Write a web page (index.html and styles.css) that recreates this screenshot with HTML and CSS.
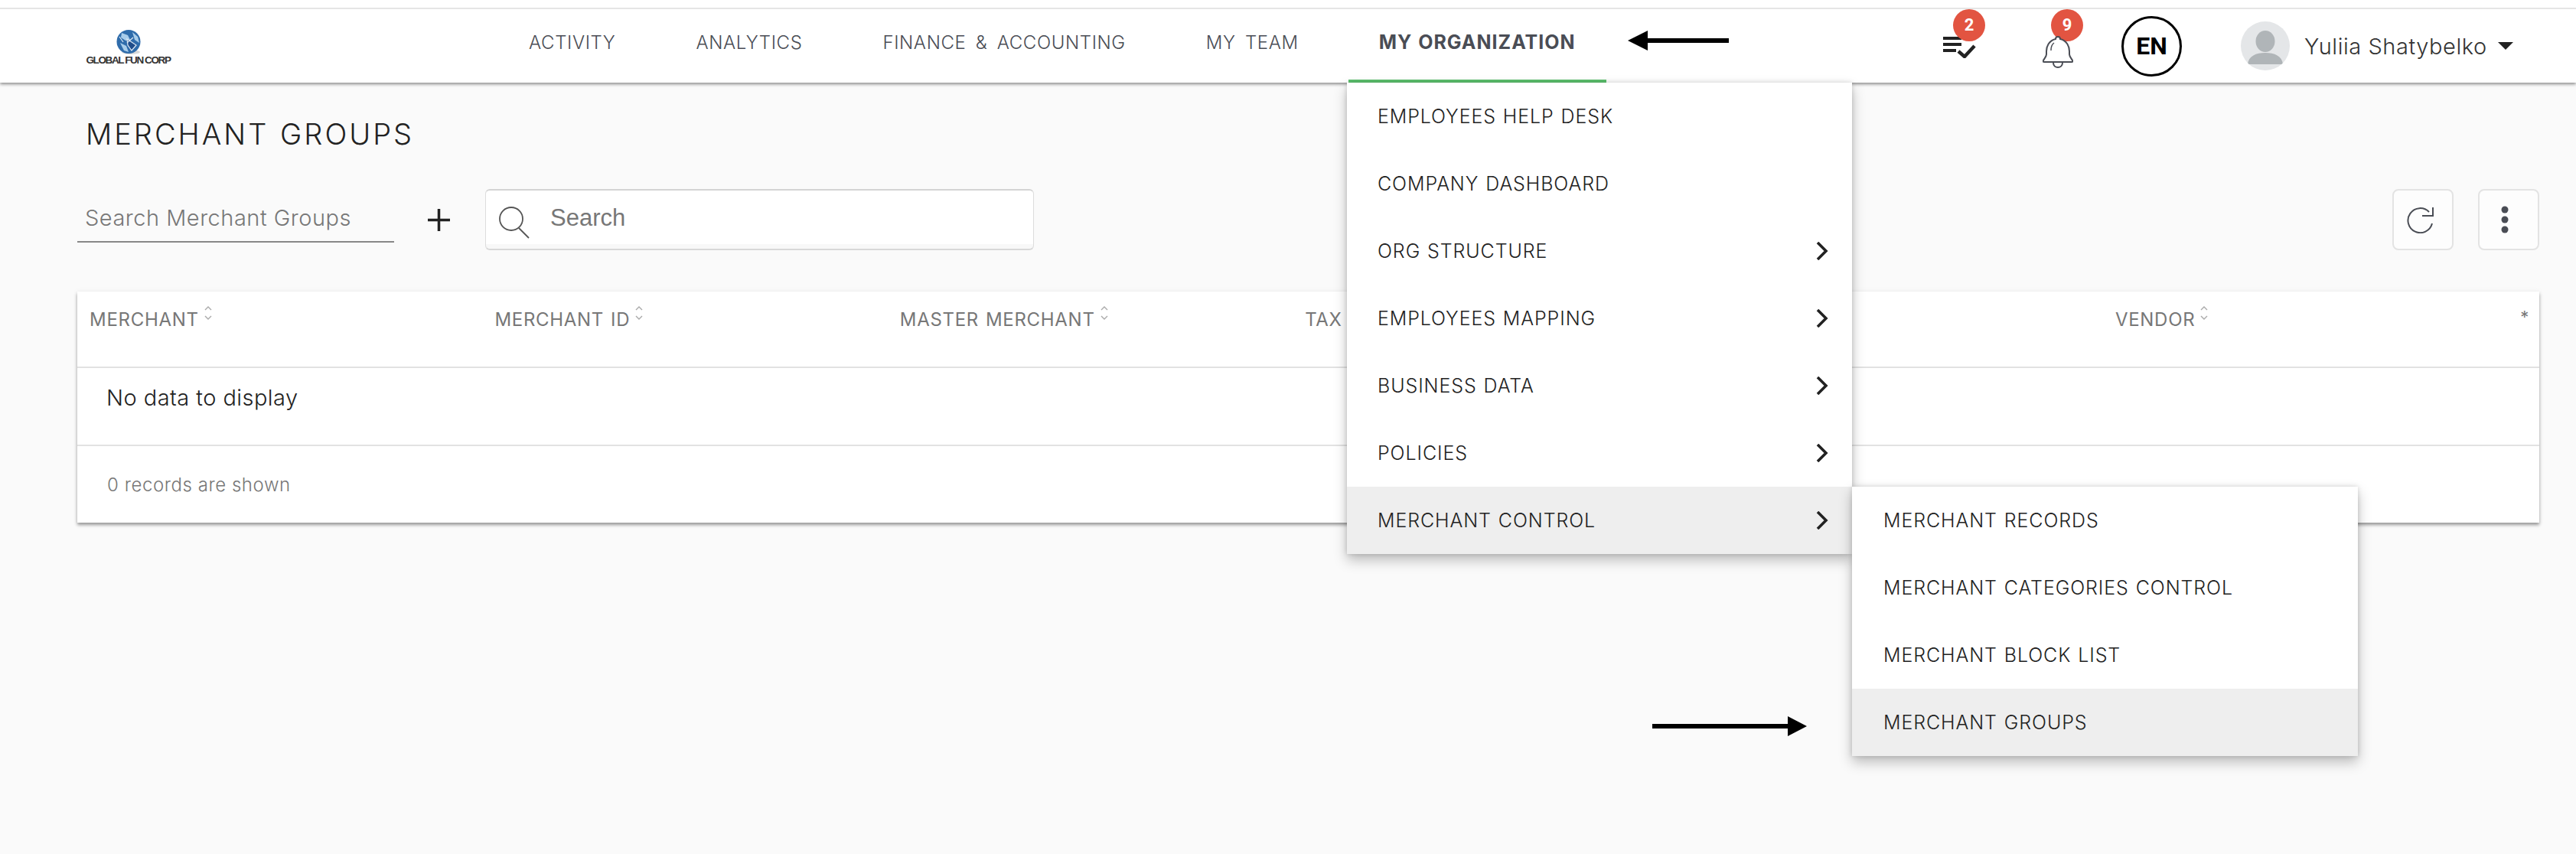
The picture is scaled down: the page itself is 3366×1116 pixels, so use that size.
FILE: index.html
```html
<!DOCTYPE html>
<html lang="en">
<head>
<meta charset="utf-8">
<title>Merchant Groups</title>
<link rel="stylesheet" href="styles.css">
</head>
<body>
<div class="page">
  <header class="topbar">
    <div class="logo">
      <svg class="globe" viewBox="0 0 32 32" aria-hidden="true">
        <ellipse cx="19" cy="29" rx="12" ry="3" fill="#d9d9d9"/>
        <circle cx="16" cy="15.500" r="15.500" fill="#2f6cab"/>
        <path d="M7 4l8 3 3 6-6 1-6-4zM21 3l7 6 2 8-6-4zM5 17l8 4 3 8-6-2z" fill="#a9cdea"/>
        <path d="M14 12l12 8-6 7-5-7zM4 9l5 7M22 10l-8 7" fill="#1f4d8a" stroke="#dfeaf5" stroke-width="1.200"/>
      </svg>
      <span class="logo-text">GLOBAL FUN CORP</span>
    </div>
    <nav class="nav">
      <a class="nav-link">ACTIVITY</a>
      <a class="nav-link">ANALYTICS</a>
      <a class="nav-link">FINANCE &amp; ACCOUNTING</a>
      <a class="nav-link">MY TEAM</a>
      <a class="nav-link nav-active">MY ORGANIZATION</a>
    </nav>
    <div class="user-tools">
      <div class="tool tool-tasks">
        <span class="badge">2</span>
        <svg class="icon-tasks" viewBox="0 0 43 28" aria-hidden="true">
          <path d="M0 0h24v4H0zM0 8h24v4H0zM0 16h17v4H0z" fill="#222"/>
          <path d="M20 19l8 7 13-14" fill="none" stroke="#222" stroke-width="4.500"/>
        </svg>
      </div>
      <div class="tool tool-bell">
        <span class="badge">9</span>
        <svg class="icon-bell" viewBox="0 0 40 42" aria-hidden="true">
          <path d="M20 1c-2 0-3 1-3 3C8 6 5 14 5 20v4c0 3-3 6-4 8q-1 2 1 2h36q2 0 1-2c-1-2-4-5-4-8v-4c0-6-3-14-12-16 0-2-1-3-3-3zM14 35c0 8 12 8 12 0" fill="#fff" stroke="#4a4d55" stroke-width="2"/>
          <path d="M11 19c0-5 1-8 4-10" fill="none" stroke="#4a4d55" stroke-width="1.500"/>
        </svg>
      </div>
      <div class="lang">EN</div>
      <div class="avatar">
        <svg viewBox="0 0 64 64" aria-hidden="true">
          <ellipse cx="32" cy="26" rx="12.500" ry="14" fill="#b0b5b8"/>
          <path d="M9 56c1-11 11-15 23-15s22 4 23 15z" fill="#b0b5b8"/>
        </svg>
      </div>
      <span class="user-name">Yuliia Shatybelko</span>
      <span class="caret"></span>
    </div>
  </header>

  <main class="content">
    <h1 class="title">MERCHANT GROUPS</h1>
    <div class="toolbar">
      <div class="list-search">Search Merchant Groups</div>
      <svg class="plus" viewBox="0 0 29 29" aria-hidden="true"><path d="M14.500 0v29M0 14.500h29" stroke="#222" stroke-width="3.500"/></svg>
      <div class="search-box">
        <svg class="search-icon" viewBox="0 0 40 42" aria-hidden="true">
          <circle cx="16" cy="16" r="15" fill="none" stroke="#555" stroke-width="1.800"/>
          <path d="M26 28l13 13" stroke="#555" stroke-width="1.800"/>
        </svg>
        <span class="search-text">Search</span>
      </div>
      <div class="actions">
        <button class="square-btn" type="button" aria-label="Refresh">
          <svg class="icon-refresh" viewBox="0 0 36 36" aria-hidden="true">
            <path d="M33 23A16 16 0 1 1 29 8M34 2v11H20" fill="none" stroke="#4a4d55" stroke-width="2"/>
          </svg>
        </button>
        <button class="square-btn" type="button" aria-label="More">
          <svg class="icon-dots" viewBox="0 0 10 36" aria-hidden="true">
            <circle cx="5" cy="5" r="4.500" fill="#4a4d55"/>
            <circle cx="5" cy="18" r="4.500" fill="#4a4d55"/>
            <circle cx="5" cy="31" r="4.500" fill="#4a4d55"/>
          </svg>
        </button>
      </div>
    </div>

    <section class="table-card">
      <div class="table-head">
        <div class="th">MERCHANT<svg class="sort" viewBox="0 0 10 18" aria-hidden="true"><path d="M1 5l4-4 4 4M1 13l4 4 4-4" fill="none" stroke="#aaa" stroke-width="1.400"/></svg></div>
        <div class="th">MERCHANT ID<svg class="sort" viewBox="0 0 10 18" aria-hidden="true"><path d="M1 5l4-4 4 4M1 13l4 4 4-4" fill="none" stroke="#aaa" stroke-width="1.400"/></svg></div>
        <div class="th">MASTER MERCHANT<svg class="sort" viewBox="0 0 10 18" aria-hidden="true"><path d="M1 5l4-4 4 4M1 13l4 4 4-4" fill="none" stroke="#aaa" stroke-width="1.400"/></svg></div>
        <div class="th">TAX</div>
        <div class="th"></div>
        <div class="th">VENDOR<svg class="sort" viewBox="0 0 10 18" aria-hidden="true"><path d="M1 5l4-4 4 4M1 13l4 4 4-4" fill="none" stroke="#aaa" stroke-width="1.400"/></svg></div>
        <div class="th th-star">*</div>
      </div>
      <div class="table-empty">No data to display</div>
      <div class="table-foot">0 records are shown</div>
    </section>
  </main>

  <ul class="menu">
    <li class="menu-item">EMPLOYEES HELP DESK</li>
    <li class="menu-item">COMPANY DASHBOARD</li>
    <li class="menu-item">ORG STRUCTURE<svg class="chev" viewBox="0 0 16 24" aria-hidden="true"><path d="M2 1l11 11-11 11" fill="none" stroke="#222" stroke-width="3.600"/></svg></li>
    <li class="menu-item">EMPLOYEES MAPPING<svg class="chev" viewBox="0 0 16 24" aria-hidden="true"><path d="M2 1l11 11-11 11" fill="none" stroke="#222" stroke-width="3.600"/></svg></li>
    <li class="menu-item">BUSINESS DATA<svg class="chev" viewBox="0 0 16 24" aria-hidden="true"><path d="M2 1l11 11-11 11" fill="none" stroke="#222" stroke-width="3.600"/></svg></li>
    <li class="menu-item">POLICIES<svg class="chev" viewBox="0 0 16 24" aria-hidden="true"><path d="M2 1l11 11-11 11" fill="none" stroke="#222" stroke-width="3.600"/></svg></li>
    <li class="menu-item menu-item-on">MERCHANT CONTROL<svg class="chev" viewBox="0 0 16 24" aria-hidden="true"><path d="M2 1l11 11-11 11" fill="none" stroke="#222" stroke-width="3.600"/></svg>
      <ul class="submenu">
        <li class="menu-item">MERCHANT RECORDS</li>
        <li class="menu-item">MERCHANT CATEGORIES CONTROL</li>
        <li class="menu-item">MERCHANT BLOCK LIST</li>
        <li class="menu-item menu-item-on">MERCHANT GROUPS</li>
      </ul>
    </li>
  </ul>

  <svg class="arrow arrow-left" viewBox="0 0 132 26" aria-hidden="true"><path d="M0 13L26 0v10h106v6H26v10z" fill="#000"/></svg>
  <svg class="arrow arrow-right" viewBox="0 0 202 26" aria-hidden="true"><path d="M202 13L177 0v10H0v6h177v10z" fill="#000"/></svg>
</div>
</body>
</html>
```

FILE: styles.css
```css
* { box-sizing: border-box; }
html, body { margin: 0; padding: 0; }
body {
  background: #fafafa;
  font-family: Inter, "Liberation Sans", sans-serif;
  font-weight: 300;
  color: #222;
}
.page {
  position: relative;
  width: 3366px;
  height: 1116px;
  overflow: hidden;
}

/* top bar */
.topbar {
  position: relative;
  z-index: 2;
  display: flex;
  align-items: center;
  height: 108px;
  padding-top: 12px;
  padding-left: 116px;
  padding-right: 82px;
  background: #fff;
  box-shadow: 0 2px 4px rgba(0, 0, 0, .45);
}
.topbar::before {
  content: "";
  position: absolute;
  left: 0;
  right: 0;
  top: 10px;
  height: 2px;
  background: #e5e5e5;
}
.logo {
  display: flex;
  flex-direction: column;
  align-items: center;
  width: 103px;
  height: 96px;
  padding-top: 26px;
}
.globe { width: 32px; height: 34px; display: block; }
.logo-text {
  font-family: "Liberation Sans", sans-serif;
  font-weight: 700;
  font-size: 13.500px;
  line-height: 14px;
  color: #333;
  white-space: nowrap;
  letter-spacing: -1.400px;
}
.nav {
  display: flex;
  gap: 25px;
  margin-left: 432px;
  height: 96px;
}
.nav-link {
  display: flex;
  align-items: center;
  padding: 0 40px 10px;
  font-size: 24px;
  letter-spacing: .6px;
  word-spacing: 5px;
  color: #4a4d55;
  white-space: nowrap;
}
.nav-active {
  position: relative;
  z-index: 6;
  font-size: 25px;
  font-weight: 700;
  letter-spacing: 1px;
  word-spacing: 1px;
  border-bottom: 4px solid #5cc16e;
  padding-bottom: 6px;
}
.user-tools {
  display: flex;
  align-items: center;
  margin-left: auto;
}
.tool { position: relative; }
.tool-tasks { width: 43px; height: 28px; margin-top: 4px; }
.tool-bell { width: 40px; height: 42px; margin-top: 16px; margin-left: 87px; }
.badge {
  position: absolute;
  width: 42px;
  height: 42px;
  border-radius: 50%;
  background: #e25441;
  color: #fff;
  font-family: Roboto, sans-serif;
  font-weight: 700;
  font-size: 22px;
  line-height: 42px;
  text-align: center;
}
.tool-tasks .badge { left: 13px; top: -36px; z-index: 1; }
.tool-bell .badge { left: 11px; top: -35px; }
.icon-tasks, .icon-bell { display: block; width: 100%; height: 100%; }
.icon-bell { position: relative; }
.lang {
  width: 79px;
  height: 79px;
  margin-left: 63px;
  border: 3px solid #000;
  border-radius: 50%;
  font-family: Roboto, sans-serif;
  font-weight: 700;
  font-size: 32px;
  line-height: 73px;
  text-align: center;
  color: #000;
}
.avatar {
  width: 64px;
  height: 64px;
  margin-left: 77px;
  border-radius: 50%;
  background: #e4e6e8;
  overflow: hidden;
}
.avatar svg { display: block; width: 64px; height: 64px; }
.user-name {
  width: 239px;
  margin-left: 19px;
  font-size: 29px;
  letter-spacing: .55px;
  color: #333;
  white-space: nowrap;
}
.caret {
  width: 0;
  height: 0;
  margin-left: 14px;
  border-left: 10px solid transparent;
  border-right: 10px solid transparent;
  border-top: 10px solid #222;
}

/* main */
.content { padding: 47px 48px 0 101px; }
.title {
  margin: 0 0 52px 11px;
  font-size: 38px;
  line-height: 40px;
  font-weight: 300;
  letter-spacing: 3px;
  word-spacing: 1px;
  color: #222;
}
.toolbar {
  display: flex;
  align-items: flex-start;
  height: 80px;
}
.list-search {
  width: 414px;
  height: 70px;
  padding: 20px 0 0 10px;
  border-bottom: 2px solid #888;
  font-size: 29px;
  line-height: 36px;
  letter-spacing: .5px;
  color: #777;
  white-space: nowrap;
}
.plus { width: 29px; height: 29px; margin: 26px 0 0 44px; }
.search-box {
  display: flex;
  align-items: flex-start;
  width: 717px;
  height: 80px;
  margin-left: 46px;
  padding: 21px 0 0 17px;
  background: linear-gradient(#fff 70px, #f8f8f8 70px);
  border: 1px solid #dcdcdc;
  border-top: 2px solid #d4d4d4;
  border-bottom: 2px solid #d8d8d8;
  border-radius: 6px;
}
.search-icon { width: 40px; height: 42px; }
.search-text {
  margin-left: 27px;
  margin-top: -2px;
  font-family: "Liberation Sans", sans-serif;
  font-weight: 400;
  font-size: 31px;
  line-height: 34px;
  color: #777;
}
.actions { display: flex; gap: 32px; margin-left: auto; }
.square-btn {
  display: flex;
  align-items: center;
  justify-content: center;
  width: 80px;
  height: 80px;
  padding: 0;
  background: #fdfdfd;
  border: 2px solid #e3e3e3;
  border-radius: 8px;
}
.icon-refresh { width: 36px; height: 36px; margin-right: 6px; }
.icon-dots { width: 10px; height: 36px; margin-right: 10px; }

/* table */
.table-card {
  margin-top: 54px;
  background: #fff;
  box-shadow: 0 3px 4px rgba(0, 0, 0, .38), 0 0 8px rgba(0, 0, 0, .05);
}
.table-head {
  display: grid;
  grid-template-columns: repeat(6, 529.400px) 1fr;
  height: 100px;
  padding: 25px 0 0 16px;
  border-bottom: 2px solid #e2e2e2;
}
.th {
  display: flex;
  align-items: flex-start;
  font-size: 24px;
  line-height: 24px;
  letter-spacing: .7px;
  word-spacing: 1.500px;
  color: #777;
  font-weight: 400;
  white-space: nowrap;
}
.sort { width: 10px; height: 18px; margin: -6px 0 0 7px; }
.th-star { padding-left: 0; font-size: 22px; margin-top: -4px; }
.table-empty {
  height: 102px;
  padding: 21px 0 0 38px;
  border-bottom: 2px solid #e2e2e2;
  font-size: 29px;
  line-height: 36px;
  letter-spacing: .45px;
  color: #222;
}
.table-foot {
  height: 100px;
  padding: 37px 0 0 39px;
  font-size: 24px;
  line-height: 28px;
  letter-spacing: .55px;
  color: #777;
}

/* dropdown menus */
.menu, .submenu {
  margin: 0;
  padding: 0;
  list-style: none;
  background: #fff;
  box-shadow: 0 8px 16px rgba(0, 0, 0, .25), 0 0 6px rgba(0, 0, 0, .15);
}
.menu {
  position: absolute;
  z-index: 3;
  left: 1760px;
  top: 108px;
  width: 660px;
}
.submenu {
  position: absolute;
  left: 100%;
  top: 0;
  width: 661px;
}
.menu-item {
  position: relative;
  display: flex;
  align-items: center;
  justify-content: space-between;
  height: 88px;
  padding: 0 31px 0 40px;
  font-size: 25px;
  letter-spacing: .9px;
  word-spacing: 1px;
  color: #222;
  white-space: nowrap;
}
.submenu .menu-item { padding-left: 41px; }
.menu-item-on { background: #eee; }
.chev { width: 16px; height: 24px; }

/* annotation arrows */
.arrow { position: absolute; z-index: 4; }
.arrow-left { left: 2127px; top: 40px; width: 132px; height: 26px; }
.arrow-right { left: 2159px; top: 936px; width: 202px; height: 26px; }
```
